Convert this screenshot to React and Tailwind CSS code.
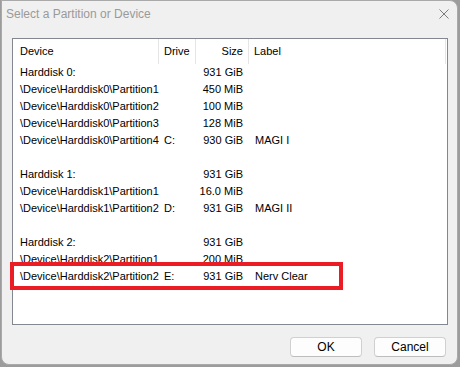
import React from 'react';

const rows = [
  { device: 'Harddisk 0:', drive: '', size: '931 GiB', label: '' },
  { device: '\\Device\\Harddisk0\\Partition1', drive: '', size: '450 MiB', label: '' },
  { device: '\\Device\\Harddisk0\\Partition2', drive: '', size: '100 MiB', label: '' },
  { device: '\\Device\\Harddisk0\\Partition3', drive: '', size: '128 MiB', label: '' },
  { device: '\\Device\\Harddisk0\\Partition4', drive: 'C:', size: '930 GiB', label: 'MAGI I' },
  { device: '', drive: '', size: '', label: '' },
  { device: 'Harddisk 1:', drive: '', size: '931 GiB', label: '' },
  { device: '\\Device\\Harddisk1\\Partition1', drive: '', size: '16.0 MiB', label: '' },
  { device: '\\Device\\Harddisk1\\Partition2', drive: 'D:', size: '931 GiB', label: 'MAGI II' },
  { device: '', drive: '', size: '', label: '' },
  { device: 'Harddisk 2:', drive: '', size: '931 GiB', label: '' },
  { device: '\\Device\\Harddisk2\\Partition1', drive: '', size: '200 MiB', label: '' },
  { device: '\\Device\\Harddisk2\\Partition2', drive: 'E:', size: '931 GiB', label: 'Nerv Clear' },
];

const App = () => {
  return (
    <div
      className="w-[460px] h-[367px] bg-[#9c9c9c] pl-[1px] overflow-hidden"
      style={{ fontFamily: '"Liberation Sans", Arial, sans-serif' }}
    >
      {/* Dialog window */}
      <div className="relative w-[457px] h-[365px] bg-[#f0f0f0] border border-[#a9a9a9] rounded-b-lg rounded-tr-lg flex flex-col">
        {/* Title bar */}
        <div className="h-[26px] flex items-center justify-between pl-[4px] pr-[8px]">
          <span className="text-[12px] text-[#9a9a9a]">Select a Partition or Device</span>
          <svg width="10" height="10" viewBox="0 0 10 10">
            <path d="M0.5 0.5 L9.5 9.5 M9.5 0.5 L0.5 9.5" stroke="#7c7c7c" strokeWidth="1" />
          </svg>
        </div>

        {/* List view */}
        <div className="mt-[11px] ml-[10px] w-[436px] h-[287px] bg-white border border-[#828790] text-[11px] text-black">
          <div className="flex h-[25px]">
            <div className="w-[146px] flex items-center pl-[7px] border-r border-[#e5e5e5]">Device</div>
            <div className="w-[37px] flex items-center pl-[5px] border-r border-[#e5e5e5]">Drive</div>
            <div className="w-[53px] flex items-center justify-end pr-[5px] border-r border-[#e5e5e5]">Size</div>
            <div className="w-[197px] flex items-center pl-[5px] border-r border-[#e5e5e5]">Label</div>
          </div>
          {rows.map((r, i) => (
            <div key={i} className="flex h-[17px] leading-[17px] whitespace-nowrap">
              <div className="w-[146px] pl-[7px]">{r.device}</div>
              <div className="w-[37px] pl-[5px]">{r.drive}</div>
              <div className="w-[53px] pr-[6px] text-right">{r.size}</div>
              <div className="pl-[6px]">{r.label}</div>
            </div>
          ))}
        </div>

        {/* Buttons */}
        <div className="flex justify-end gap-[12px] mt-[12px] pr-[11px]">
          <button className="w-[72px] h-[20px] bg-[#fdfdfd] border border-[#d0d0d0] border-b-[#bdbdbd] rounded-[4px] text-[12px] text-black">
            OK
          </button>
          <button className="w-[72px] h-[20px] bg-[#fdfdfd] border border-[#d0d0d0] border-b-[#bdbdbd] rounded-[4px] text-[12px] text-black">
            Cancel
          </button>
        </div>

        {/* Highlight overlay */}
        <div className="absolute left-[8px] top-[261px] w-[333px] h-[28px] border-4 border-[#ec1c24] pointer-events-none" />
      </div>
    </div>
  );
};

export default App;
